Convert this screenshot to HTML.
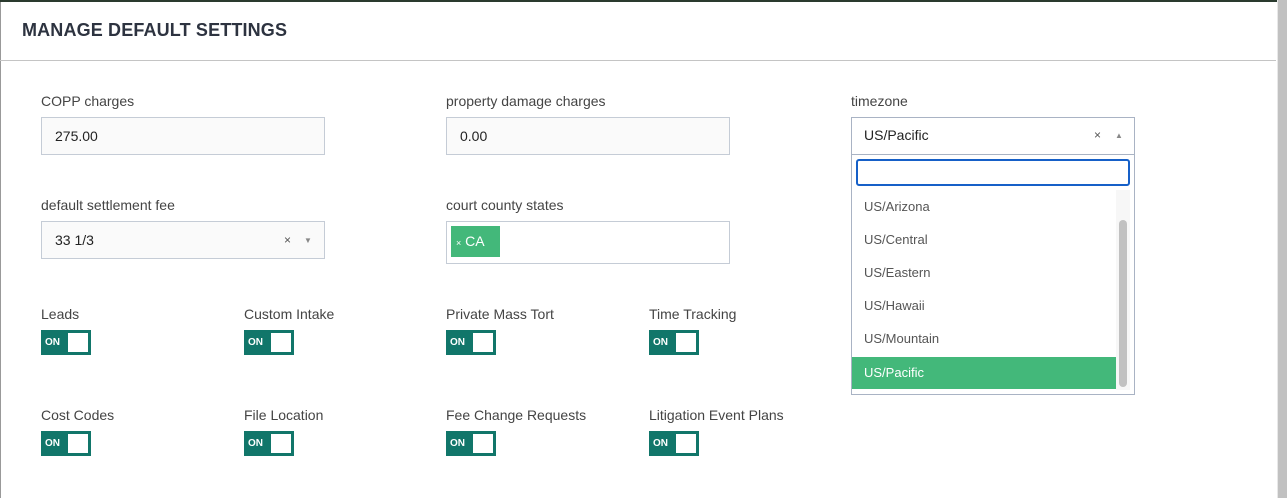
<!DOCTYPE html>
<html><head><style>
*{box-sizing:border-box;margin:0;padding:0}
body{width:1287px;height:498px;background:#fff;font-family:"Liberation Sans",sans-serif;position:relative;overflow:hidden;color:#333}
.top{position:absolute;left:0;top:0;width:1287px;height:2px;background:#2a3a2e}
.sb{position:absolute;left:1277px;top:0;width:10px;height:498px;background:#c1c1c1;border-left:1px solid #e8e8e8}
.lbl{position:absolute;font-size:14px;color:#444}
.in{position:absolute;border:1px solid #c5ccd6;background:#fafafa;font-size:14px;color:#222;padding-left:13px;line-height:36px}
.tg{position:absolute;width:50px;height:25px;background:#11766a}
.tg span{position:absolute;left:4px;top:7px;font-size:10px;color:#fff;font-weight:bold}
.tg i{position:absolute;left:27px;top:3px;width:20px;height:19px;background:#fff}
.opt{position:absolute;left:852px;width:264px;height:32px;font-size:13px;color:#555;padding-left:12px;line-height:32px}
</style></head><body>
<div class="top"></div>
<div style="position:absolute;left:0;top:2px;width:1277px;height:496px;border-left:1px solid #999"></div>
<div style="position:absolute;left:22px;top:20px;font-size:18px;letter-spacing:0.15px;font-weight:bold;color:#2d3340">MANAGE DEFAULT SETTINGS</div>
<div style="position:absolute;left:0;top:60px;width:1276px;height:1px;background:#c4c4c4"></div>
<div class="sb"></div>

<div class="lbl" style="left:41px;top:93px">COPP charges</div>
<div class="in" style="left:41px;top:117px;width:284px;height:38px">275.00</div>
<div class="lbl" style="left:446px;top:93px">property damage charges</div>
<div class="in" style="left:446px;top:117px;width:284px;height:38px">0.00</div>
<div class="lbl" style="left:851px;top:93px">timezone</div>

<div class="lbl" style="left:41px;top:197px">default settlement fee</div>
<div class="in" style="left:41px;top:221px;width:284px;height:38px">33 1/3<span style="position:absolute;left:242px;font-size:12px;color:#555">×</span><span style="position:absolute;left:262px;top:1px;font-size:8px;color:#888">▼</span></div>
<div class="lbl" style="left:446px;top:197px">court county states</div>
<div class="in" style="left:446px;top:221px;width:284px;height:43px;background:#fff"><div style="position:absolute;left:4px;top:4px;width:49px;height:31px;background:#43b87a;color:#fff;line-height:31px;font-size:14px;padding-left:5px"><span style="font-size:9px">×</span> CA</div></div>

<div class="lbl" style="left:41px;top:306px">Leads</div><div class="tg" style="left:41px;top:330px"><span>ON</span><i></i></div>
<div class="lbl" style="left:244px;top:306px">Custom Intake</div><div class="tg" style="left:244px;top:330px"><span>ON</span><i></i></div>
<div class="lbl" style="left:446px;top:306px">Private Mass Tort</div><div class="tg" style="left:446px;top:330px"><span>ON</span><i></i></div>
<div class="lbl" style="left:649px;top:306px">Time Tracking</div><div class="tg" style="left:649px;top:330px"><span>ON</span><i></i></div>
<div class="lbl" style="left:41px;top:407px">Cost Codes</div><div class="tg" style="left:41px;top:431px"><span>ON</span><i></i></div>
<div class="lbl" style="left:244px;top:407px">File Location</div><div class="tg" style="left:244px;top:431px"><span>ON</span><i></i></div>
<div class="lbl" style="left:446px;top:407px">Fee Change Requests</div><div class="tg" style="left:446px;top:431px"><span>ON</span><i></i></div>
<div class="lbl" style="left:649px;top:407px">Litigation Event Plans</div><div class="tg" style="left:649px;top:431px"><span>ON</span><i></i></div>

<div style="position:absolute;left:851px;top:117px;width:284px;height:278px;border:1px solid #a9b3c4;background:#fff"></div>
<div style="position:absolute;left:852px;top:154px;width:282px;height:1px;background:#a9b3c4"></div>
<div style="position:absolute;left:864px;top:127px;font-size:14px;color:#222">US/Pacific</div>
<div style="position:absolute;left:1094px;top:128px;font-size:12px;color:#555">×</div>
<div style="position:absolute;left:1115px;top:131px;font-size:8px;color:#888">▲</div>
<div style="position:absolute;left:856px;top:159px;width:274px;height:27px;border:2px solid #1660c8;border-radius:3px"></div>
<div style="position:absolute;left:1116px;top:190px;width:14px;height:200px;background:#f7f7f7"></div>
<div style="position:absolute;left:1119px;top:220px;width:8px;height:167px;background:#c1c1c1;border-radius:4px"></div>
<div class="opt" style="top:191px">US/Arizona</div>
<div class="opt" style="top:224px">US/Central</div>
<div class="opt" style="top:257px">US/Eastern</div>
<div class="opt" style="top:290px">US/Hawaii</div>
<div class="opt" style="top:323px">US/Mountain</div>
<div class="opt" style="top:357px;background:#43b87a;color:#fff">US/Pacific</div>
</body></html>
